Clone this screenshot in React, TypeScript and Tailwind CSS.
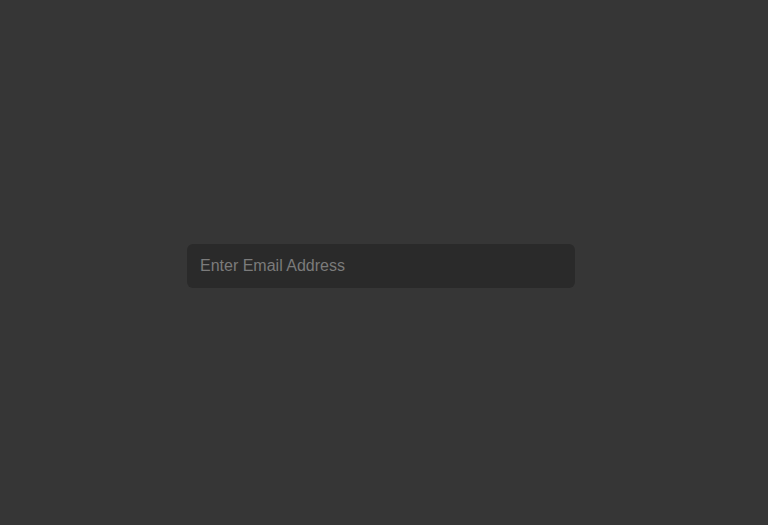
export default function App() {
  return (
    <div
      className="min-h-[525px] w-full bg-[#363636] pt-[244px] pl-[187px]"
      style={{ fontFamily: '"Liberation Sans", Arial, sans-serif' }}
    >
      <input
        type="email"
        placeholder="Enter Email Address"
        className="block w-[388px] h-[44px] rounded-md bg-[#2a2a2a] pl-[13px] pr-3 text-base text-gray-200 placeholder:text-[#7b7b7b] outline-none border-none"
      />
    </div>
  );
}
